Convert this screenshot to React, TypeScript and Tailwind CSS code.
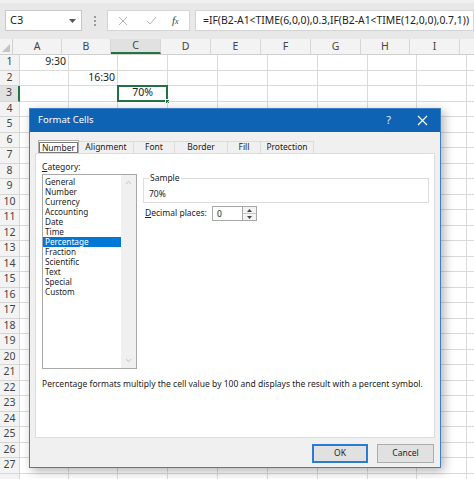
import { ChevronDown, ChevronUp } from "lucide-react";

const cols = [
  { name: "A", w: "w-[49px]" },
  { name: "B", w: "w-[49px]" },
  { name: "C", w: "w-[50px]" },
  { name: "D", w: "w-[50px]" },
  { name: "E", w: "w-[50px]" },
  { name: "F", w: "w-[50px]" },
  { name: "G", w: "w-[50px]" },
  { name: "H", w: "w-[49px]" },
  { name: "I", w: "w-[50px]" },
  { name: "", w: "w-[50px]" },
];

const cellValues: Record<string, string> = {
  A1: "9:30",
  B2: "16:30",
  C3: "70%",
};

const categories = [
  "General",
  "Number",
  "Currency",
  "Accounting",
  "Date",
  "Time",
  "Percentage",
  "Fraction",
  "Scientific",
  "Text",
  "Special",
  "Custom",
];

const tabs = [
  { name: "Number", w: "w-[41px]" },
  { name: "Alignment", w: "w-[55px]" },
  { name: "Font", w: "w-[41px]" },
  { name: "Border", w: "w-[53px]" },
  { name: "Fill", w: "w-[33px]" },
  { name: "Protection", w: "w-[53px]" },
];

function Toolbar() {
  return (
    <div className="h-[39px] bg-[#e8e8e8] border-t-[3px] border-[#f1f1f1] flex items-start pt-[7px] pl-[5px]">
      <div className="w-[77px] h-[21px] bg-white border border-[#c8c8c8] flex items-center justify-between pl-[4px] pr-[5px]">
        <span className="text-[11px] text-[#222]">C3</span>
        <svg width="7" height="4" viewBox="0 0 7 4">
          <path d="M0 0 L7 0 L3.5 4 Z" fill="#555" />
        </svg>
      </div>
      <div className="w-[25px] h-[21px] flex flex-col items-center justify-center gap-[2px]">
        <span className="w-[2px] h-[2px] bg-[#9a9a9a]" />
        <span className="w-[2px] h-[2px] bg-[#9a9a9a]" />
        <span className="w-[2px] h-[2px] bg-[#9a9a9a]" />
      </div>
      <div className="w-[83px] h-[21px] bg-white border border-[#d4d4d4] flex items-center">
        <svg width="10" height="10" viewBox="0 0 10 10" className="ml-[10px]">
          <path d="M1 1 L9 9 M9 1 L1 9" stroke="#b5b5b5" strokeWidth="1" />
        </svg>
        <svg width="11" height="9" viewBox="0 0 11 9" className="ml-[18px]">
          <path d="M1 5 L4 8 L10 1" stroke="#b5b5b5" strokeWidth="1" fill="none" />
        </svg>
        <span className="ml-[15px] text-[11px] italic text-[#444] font-['Liberation_Serif',serif]">
          f<span className="text-[8px]">x</span>
        </span>
      </div>
      <div className="flex-1 h-[21px] ml-[5px] bg-white border border-[#d4d4d4] flex items-center pl-[7px]">
        <span className="text-[10.4px] text-[#222] whitespace-nowrap">
          =IF(B2-A1&lt;TIME(6,0,0),0.3,IF(B2-A1&lt;TIME(12,0,0),0.7,1))
        </span>
      </div>
    </div>
  );
}

function Grid() {
  const rows = Array.from({ length: 28 }, (_, i) => i + 1);
  return (
    <div className="text-[10.5px] text-[#222]">
      <div className="flex h-[16px] bg-[#f3f3f3] border-b border-[#d0d0d0]">
        <div className="w-[20px] border-r border-[#d0d0d0] flex items-end justify-end p-[2px]">
          <svg width="8" height="8" viewBox="0 0 8 8">
            <path d="M8 0 L8 8 L0 8 Z" fill="#c4c4c4" />
          </svg>
        </div>
        {cols.map((c, i) => (
          <div
            key={i}
            className={`${c.w} shrink-0 flex items-center justify-center border-r border-[#d6d6d6] text-[#444] ${
              c.name === "C" ? "bg-[#e1e1e1] border-b-2 border-b-[#217346]" : ""
            }`}
          >
            {c.name}
          </div>
        ))}
      </div>
      {rows.map((r) => (
        <div key={r} className="flex h-[15.5px]">
          <div
            className={`w-[20px] shrink-0 flex items-center justify-center text-[#444] border-b border-[#d6d6d6] ${
              r === 3 ? "bg-[#e1e1e1] border-r-2 border-r-[#217346]" : "bg-[#f3f3f3] border-r border-[#d0d0d0]"
            }`}
          >
            {r < 28 ? r : ""}
          </div>
          {cols.map((c, i) => {
            const key = `${c.name}${r}`;
            const v = cellValues[key];
            const selected = key === "C3";
            return (
              <div
                key={i}
                className={`${c.w} shrink-0 relative flex items-center border-r border-b border-[#dadada] ${
                  selected ? "justify-center" : "justify-end pr-[2px]"
                }`}
              >
                {v}
                {selected && (
                  <>
                    <div className="absolute -left-[1px] -top-[1px] -right-[1px] -bottom-[1px] border-2 border-[#217346]" />
                    <div className="absolute -right-[3px] -bottom-[3px] w-[5px] h-[5px] bg-[#217346] border border-white" />
                  </>
                )}
              </div>
            );
          })}
        </div>
      ))}
    </div>
  );
}

function Dialog() {
  return (
    <div className="absolute left-[29px] top-[108px] w-[412px] h-[360px] bg-[#f0f0f0] border border-[#3d7fc2] shadow-[3px_3px_10px_rgba(0,0,0,0.3)] flex flex-col text-[8.5px] text-[#222]">
      <div className="h-[23px] bg-[#0f63b4] flex items-center pl-[8px] text-white shrink-0">
        <span className="text-[9.5px] flex-1">Format Cells</span>
        <span className="text-[11px] mr-[26px] text-[#dfe9f5]">?</span>
        <svg width="11" height="11" viewBox="0 0 11 11" className="mr-[12px]">
          <path d="M1 1 L10 10 M10 1 L1 10" stroke="white" strokeWidth="1.2" />
        </svg>
      </div>
      <div className="flex flex-col px-[5px] pt-[8px]">
        <div className="flex items-end pl-[3px] h-[13px]">
          {tabs.map((t, i) => (
            <div
              key={t.name}
              className={
                i === 0
                  ? `${t.w} h-[13px] bg-white border border-b-0 border-[#adadad] flex items-center justify-center`
                  : `${t.w} h-[12px] bg-[#f0f0f0] border-t border-r border-[#dcdcdc] flex items-center justify-center`
              }
            >
              {i === 0 ? (
                <span className="px-[2px] border border-[#7a7a7a] leading-[9px]">{t.name}</span>
              ) : (
                t.name
              )}
            </div>
          ))}
        </div>
        <div className="h-[285px] bg-white border border-[#dcdcdc] pl-[6px] pr-[5px] pt-[7px] flex flex-col">
          <div className="flex gap-[6px]">
            <div className="flex flex-col w-[95px]">
              <span className="leading-[11px]">
                <span className="underline">C</span>ategory:
              </span>
              <div className="mt-[2px] h-[195px] border border-[#a8a8a8] flex">
                <div className="flex-1 pt-[2px] text-[8.2px]">
                  {categories.map((c) => (
                    <div
                      key={c}
                      className={`h-[10px] leading-[10px] pl-[2px] whitespace-nowrap ${
                        c === "Percentage" ? "bg-[#0078d7] text-white" : ""
                      }`}
                    >
                      {c}
                    </div>
                  ))}
                </div>
                <div className="w-[15px] bg-[#f0f0f0] flex flex-col items-center justify-between py-[3px]">
                  <ChevronUp size={9} color="#b0b0b0" strokeWidth={2} />
                  <ChevronDown size={9} color="#b0b0b0" strokeWidth={2} />
                </div>
              </div>
            </div>
            <div className="flex-1 flex flex-col pt-[12px]">
              <fieldset className="h-[30px] border border-[#dcdcdc] px-[5px]">
                <legend className="px-[1px] leading-[10px]">Sample</legend>
                <div className="leading-[12px] mt-[5px]">70%</div>
              </fieldset>
              <div className="flex items-center mt-[3px] pl-[2px]">
                <span className="w-[67px]">
                  <span className="underline">D</span>ecimal places:
                </span>
                <div className="w-[31px] h-[15px] border border-[#a8a8a8] bg-white pl-[4px] leading-[13px]">0</div>
                <div className="w-[14px] h-[15px] border border-l-0 border-[#a8a8a8] bg-[#f3f3f3] flex flex-col">
                  <div className="flex-1 flex items-center justify-center border-b border-[#c8c8c8]">
                    <svg width="5" height="3" viewBox="0 0 5 3">
                      <path d="M0 3 L5 3 L2.5 0 Z" fill="#444" />
                    </svg>
                  </div>
                  <div className="flex-1 flex items-center justify-center">
                    <svg width="5" height="3" viewBox="0 0 5 3">
                      <path d="M0 0 L5 0 L2.5 3 Z" fill="#444" />
                    </svg>
                  </div>
                </div>
              </div>
            </div>
          </div>
          <p className="mt-[9px] whitespace-nowrap">
            Percentage formats multiply the cell value by 100 and displays the result with a percent symbol.
          </p>
        </div>
        <div className="flex justify-end gap-[9px] mt-[6px] pr-[1px]">
          <button className="w-[56px] h-[19px] bg-[#e1e1e1] border-2 border-[#2a7bd1] text-[8.5px]">OK</button>
          <button className="w-[57px] h-[19px] bg-[#e1e1e1] border border-[#adadad] text-[8.5px]">Cancel</button>
        </div>
      </div>
    </div>
  );
}

export default function App() {
  return (
    <div className="relative w-[474px] h-[479px] overflow-hidden bg-white font-['Noto_Sans',sans-serif]">
      <Toolbar />
      <Grid />
      <Dialog />
    </div>
  );
}
